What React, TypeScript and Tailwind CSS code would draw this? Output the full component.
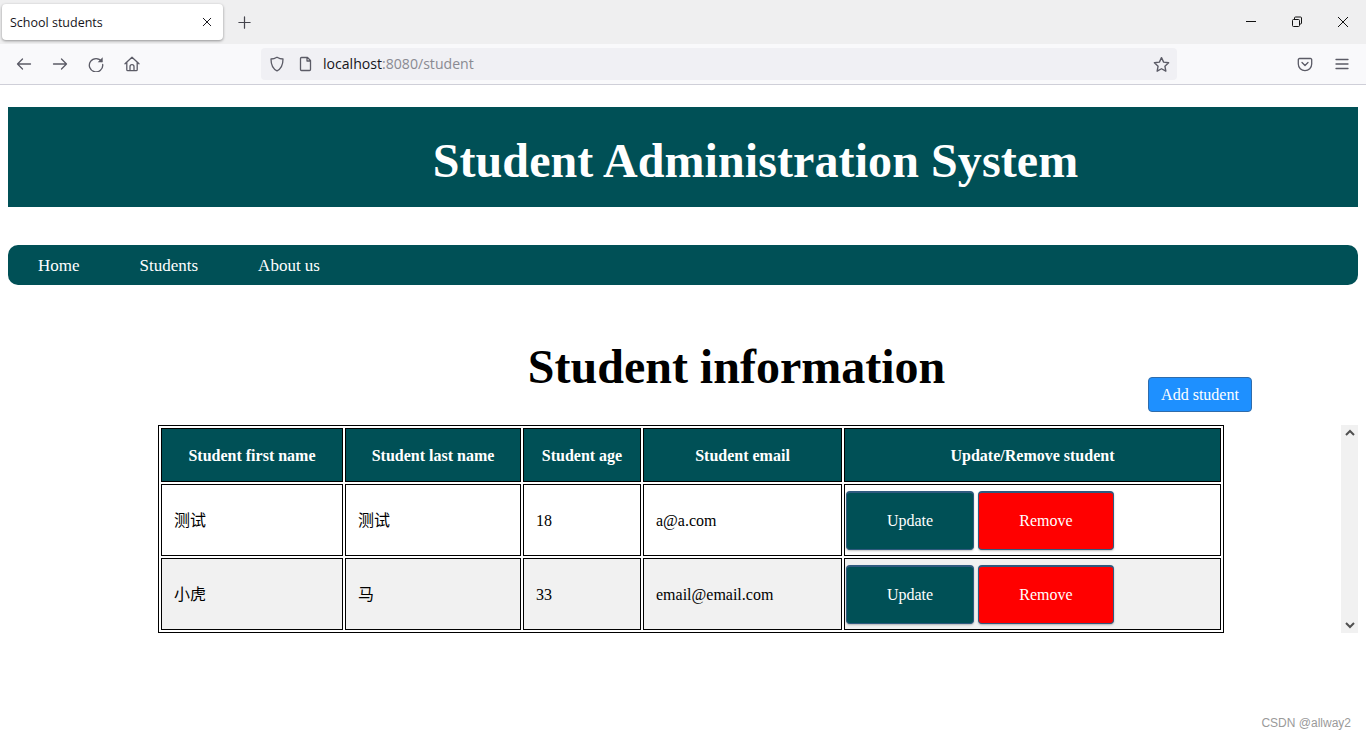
import React from "react";

const serif = "font-['Liberation_Serif','Noto_Sans_CJK_SC',serif]";
const ui = "font-['Open_Sans','Noto_Sans',sans-serif]";

const stroke = { fill: "none", stroke: "currentColor", strokeWidth: 1.3, strokeLinecap: "round" as const, strokeLinejoin: "round" as const };

function Ico({ children, size = 16, className = "" }: { children: React.ReactNode; size?: number; className?: string }) {
  return (
    <svg width={size} height={size} viewBox="0 0 16 16" className={className} {...stroke}>
      {children}
    </svg>
  );
}

function Browser() {
  return (
    <div className={`${ui} h-[85px] shrink-0 flex flex-col`}>
      <div className="h-[44px] bg-[#efeff0] flex items-start relative">
        <div className="mt-[4px] ml-[2px] w-[221px] h-[36px] bg-white rounded-[4px] shadow-[0_1px_3px_rgba(0,0,0,0.4)] flex items-center justify-between pl-[8px] pr-[10px]">
          <span className="text-[12.5px] text-[#15141a] pt-[2px]">School students</span>
          <Ico size={12} className="text-[#15141a]"><path d="M3 3l10 10M13 3L3 13" /></Ico>
        </div>
        <div className="ml-[14px] mt-[15px] text-[#45454d]">
          <Ico size={15}><path d="M8 2v12M2 8h12" /></Ico>
        </div>
        <div className="ml-auto flex items-center h-[44px] pr-[15px] gap-[30px] text-[#111]">
          <svg width="16" height="16" viewBox="0 0 16 16" fill="none" stroke="currentColor"><path d="M3 7.5h10" /></svg>
          <svg width="16" height="16" viewBox="0 0 16 16" fill="none" stroke="currentColor" strokeWidth="1"><rect x="3.500" y="5.500" width="7" height="7" rx="1" /><path d="M5.500 5.500v-1.500a1 1 0 0 1 1-1h5a1 1 0 0 1 1 1v5a1 1 0 0 1-1 1h-1" /></svg>
          <svg width="16" height="16" viewBox="0 0 16 16" fill="none" stroke="currentColor" strokeWidth="1"><path d="M3 3l10 10M13 3L3 13" /></svg>
        </div>
      </div>
      <div className="h-[41px] bg-[#f9f9fb] border-b border-[#cfcfd8] flex items-center text-[#5b5b66] relative">
        <div className="flex items-center ml-[16px] gap-[20px] w-[245px]">
          <Ico><path d="M14.500 8h-13M6.500 3l-5 5 5 5" /></Ico>
          <Ico><path d="M1.500 8h13M9.500 3l5 5-5 5" /></Ico>
          <Ico>
            <path d="M13.600 5.500A6.700 6.700 0 1 0 14.700 8.500" />
            <path d="M14.700 1.300v5h-5z" fill="currentColor" stroke="none" />
          </Ico>
          <Ico><path d="M1 7.800L8 1.200l7 6.600M2.800 6.500v7.200a1 1 0 0 0 1 1h8.400a1 1 0 0 0 1-1V6.500M6 14.700v-4a2 2 0 0 1 4 0v4" /></Ico>
        </div>
        <div className="w-[916px] h-[32px] bg-[#f0f0f4] rounded-[4px] flex items-center pl-[8px] pr-[7px]">
          <Ico className="text-[#5b5b66]" size={16}><path d="M8 1.200c2 1.200 3.800 1.800 6 1.800 0 5-1 9.500-6 11.800C3 12.500 2 8 2 3c2.200 0 4-.6 6-1.800z" /></Ico>
          <Ico className="ml-[13px] text-[#5b5b66]" size={16}><path d="M3.500 1.500h6l3 3v9a1 1 0 0 1-1 1h-8a1 1 0 0 1-1-1v-11a1 1 0 0 1 1-1zM9 1.500v3.500h3.500" /></Ico>
          <span className="ml-[9px] text-[14.1px] text-[#15141a]">localhost<span className="text-[#8a8a92]">:8080/student</span></span>
          <Ico className="ml-auto text-[#5b5b66]" size={17}><path d="M8 1.500l2 4.300 4.700.6-3.500 3.200.9 4.700L8 12l-4.100 2.300.9-4.700L1.300 6.400 6 5.800z" /></Ico>
        </div>
        <div className="ml-auto flex items-center gap-[21px] pr-[16px]">
          <Ico><path d="M2.500 2.500h11a1.200 1.200 0 0 1 1.200 1.200V8a6.700 6.700 0 0 1-13.400 0V3.700a1.200 1.200 0 0 1 1.200-1.200zM5 6.500l3 3 3-3" /></Ico>
          <Ico><path d="M2 3.500h12M2 8h12M2 12.500h12" /></Ico>
        </div>
      </div>
    </div>
  );
}

const th = "border border-black bg-[#005056] text-white font-bold h-[54px] p-0 pt-[2px] text-center";
const td = "border border-black h-[72px] px-[12px] py-0 pt-[2px] text-left";
const btnBase = "h-[59px] rounded-[4px] text-white text-[16px] border border-[#2f5a7f] border-t-2 align-middle shadow-[0_1px_2px_rgba(0,0,0,0.25)]";

function Row({ a, b, c, d, shaded }: { a: string; b: string; c: string; d: string; shaded?: boolean }) {
  const bg = shaded ? "bg-[#f1f1f1]" : "bg-white";
  return (
    <tr className={bg}>
      <td className={td}>{a}</td>
      <td className={td}>{b}</td>
      <td className={td}>{c}</td>
      <td className={td}>{d}</td>
      <td className="border border-black h-[72px] p-[1px]">
        <div className="flex gap-[4px] items-center">
          <button className={`${btnBase} w-[128px] bg-[#005056]`}>Update</button>
          <button className={`${btnBase} w-[136px] bg-[#ff0000]`}>Remove</button>
        </div>
      </td>
    </tr>
  );
}

export default function App() {
  return (
    <div className="w-[1366px] h-[738px] overflow-hidden bg-white flex flex-col relative">
      <Browser />
      <main className={`${serif} flex-1 px-[8px] text-black text-[16px]`}>
        <header className="mt-[22px] h-[100px] bg-[#005056] text-white flex items-center justify-center pl-[145px] pt-[8px]">
          <h1 className="text-[48px] font-bold leading-none tracking-[0.1px]">Student Administration System</h1>
        </header>
        <nav className="mt-[38px] h-[40px] bg-[#005056] rounded-[10px] flex items-center text-white text-[17px] pt-[1px]">
          <a className="px-[30px]">Home</a>
          <a className="px-[30px]">Students</a>
          <a className="px-[30px]">About us</a>
        </nav>
        <div className="mt-[54px] h-[86px] relative flex justify-center pl-[107px]">
          <h2 className="text-[48px] font-bold leading-[55px]">Student information</h2>
          <button className="absolute left-[1140px] top-[38px] w-[104px] h-[35px] rounded-[4px] bg-[#1e90ff] border border-[#2f6cab] text-white text-[16px]">Add student</button>
        </div>
        <div className="ml-[150px] flex justify-between h-[208px]">
          <table className="w-[1065px] h-[208px] table-fixed border-separate border-spacing-[2px] border border-black">
            <colgroup>
              <col className="w-[182px]" />
              <col className="w-[176px]" />
              <col className="w-[118px]" />
              <col className="w-[199px]" />
              <col className="w-[377px]" />
            </colgroup>
            <thead>
              <tr>
                <th className={th}>Student first name</th>
                <th className={th}>Student last name</th>
                <th className={th}>Student age</th>
                <th className={th}>Student email</th>
                <th className={th}>Update/Remove student</th>
              </tr>
            </thead>
            <tbody>
              <Row a="测试" b="测试" c="18" d="a@a.com" />
              <Row a="小虎" b="马" c="33" d="email@email.com" shaded />
            </tbody>
          </table>
          <div className="w-[17px] bg-[#f1f1f1] flex flex-col items-center justify-between py-[4px] text-[#505050]">
            <svg width="10" height="8" viewBox="0 0 10 8" fill="none" stroke="currentColor" strokeWidth="2"><path d="M1 6l4-4 4 4" /></svg>
            <svg width="10" height="8" viewBox="0 0 10 8" fill="none" stroke="currentColor" strokeWidth="2"><path d="M1 2l4 4 4-4" /></svg>
          </div>
        </div>
      </main>
      <div className="font-['Liberation_Sans',sans-serif] absolute right-[15px] top-[714px] text-[12px] text-[#9a9a9a]">CSDN @allway2</div>
    </div>
  );
}
